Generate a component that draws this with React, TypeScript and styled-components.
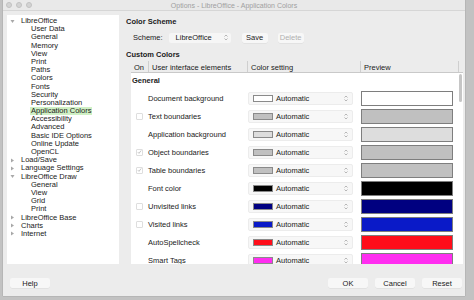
import React from "react";
import styled, { createGlobalStyle } from "styled-components";

const Global = createGlobalStyle`
  html, body { margin: 0; padding: 0; }
  body {
    width: 474px; height: 300px; overflow: hidden;
    background: #c2c2c2;
    font-family: "Liberation Sans", Arial, sans-serif;
    font-size: 7.5px; color: #1a1a1a;
  }
`;

const Desktop = styled.div`
  width: 474px; height: 300px; display: flex; padding-left: 3px; box-sizing: border-box;
`;

const Window = styled.div`
  width: 462px; height: 296px; background: #ececec; display: flex; flex-direction: column;
  box-shadow: 0 0 1px rgba(0,0,0,0.35);
`;

const TitleBar = styled.div`
  height: 10px; flex: none; position: relative; display: flex; align-items: center; justify-content: center;
  border-bottom: 1px solid #d6d6d6; background: #e9e9e9;
  color: #a0a0a0; font-size: 7px;
`;

const Lights = styled.div`
  position: absolute; left: 3px; top: 2px; display: flex; gap: 4px;
`;

const Light = styled.span`
  width: 6px; height: 6px; border-radius: 50%; background: #d3d3d3; border: 0.5px solid #c2c2c2; box-sizing: border-box;
`;

const Main = styled.div`
  display: flex; padding: 4px 2px 0 4px; gap: 7px; height: 249px; flex: none;
`;

const Tree = styled.div`
  width: 112px; height: 249px; background: #fff; padding-top: 2px; box-sizing: border-box; flex: none;
`;

const TreeRow = styled.div<{ $level: number }>`
  height: 8.2px; line-height: 8.2px; display: flex; align-items: center;
  padding-left: ${(p) => (p.$level === 0 ? 3 : 24)}px; white-space: nowrap;
`;

const Twisty = styled.span`
  width: 11px; display: inline-flex; align-items: center; justify-content: flex-start; color: #a5a5a5;
`;

const Label = styled.span<{ $sel?: boolean }>`
  background: ${(p) => (p.$sel ? "#cff0c4" : "transparent")};
  padding: 0 ${(p) => (p.$sel ? 1 : 0)}px;
  margin-left: ${(p) => (p.$sel ? -1 : 0)}px;
`;

const Right = styled.div`
  flex: 1; display: flex; flex-direction: column; min-width: 0;
`;

const Heading = styled.div`
  font-weight: bold; height: 10px; line-height: 10px; margin-top: 2px;
`;

const SchemeRow = styled.div`
  display: flex; align-items: center; height: 11px; margin-top: 5px; padding-left: 7px;
`;

const SchemeSelect = styled.div`
  width: 62px; height: 10px; margin-left: 6px; background: #f6f6f6; border-radius: 2px;
  display: flex; align-items: center; justify-content: space-between; padding: 0 3px 0 7px; box-sizing: border-box;
`;

const Button = styled.div<{ $w: number; $disabled?: boolean }>`
  width: ${(p) => p.$w}px; height: 10px; background: #f7f7f7; border-radius: 2px;
  display: flex; align-items: center; justify-content: center;
  color: ${(p) => (p.$disabled ? "#b0b0b0" : "#1a1a1a")};
  box-shadow: 0 0.5px 0.5px rgba(0,0,0,0.08);
`;

const Spacer = styled.span<{ $w: number }>`
  width: ${(p) => p.$w}px; flex: none;
`;

const Heading2 = styled(Heading)`
  margin-top: 7px;
`;

const Table = styled.div`
  margin-top: 1px; margin-left: 5px; width: 332px; display: flex; flex-direction: column;
`;

const Header = styled.div`
  display: grid; grid-template-columns: 17px 99px 113px 98px 5px; height: 11px;
  border-bottom: 1px solid #c9c9c9; box-sizing: content-box;
`;

const HeadCell = styled.div<{ $sep?: boolean }>`
  display: flex; align-items: center; padding-left: 3px;
  border-left: ${(p) => (p.$sep ? "1px solid #cfcfcf" : "none")};
  padding-top: 1px;
`;

const Body = styled.div`
  position: relative; height: 191px; background: #fff; overflow: hidden;
`;

const Group = styled.div`
  font-weight: bold; height: 9px; line-height: 9px; padding-left: 1px; margin-top: 3px; margin-bottom: 4px;
`;

const Row = styled.div`
  display: grid; grid-template-columns: 17px 99px 113px 98px; height: 18px; align-items: center;
`;

const Check = styled.div`
  width: 7px; height: 7px; margin-left: 5px; border: 0.5px solid #dedede; border-radius: 1px; box-sizing: border-box;
  display: flex; align-items: center; justify-content: center; background: #fff;
`;

const Elem = styled.div`
  white-space: nowrap;
`;

const ColorSelect = styled.div`
  width: 105px; height: 13px; margin-left: 1px; background: #f7f7f7; border-radius: 2px;
  display: flex; align-items: center; padding: 0 4px; box-sizing: border-box;
  border: 0.5px solid #ececec;
`;

const Swatch = styled.span<{ $c: string }>`
  width: 20px; height: 7px; background: ${(p) => p.$c}; border: 1px solid #8a8a8a; box-sizing: border-box; flex: none;
`;

const SwatchText = styled.span`
  margin-left: 3px; flex: 1;
`;

const Preview = styled.div<{ $c: string }>`
  width: 92px; height: 15px; margin-left: 1px; background: ${(p) => p.$c};
  border: 1px solid #7e7e7e; box-sizing: border-box;
`;

const ScrollThumb = styled.div`
  position: absolute; right: 1px; top: 1px; width: 3px; height: 28px; border-radius: 2px; background: #c6c6c6;
`;

const Footer = styled.div`
  display: flex; align-items: flex-start; padding: 14px 3px 0 7px; flex: 1;
`;

const FooterGap = styled.div`
  flex: 1;
`;

const FooterButtons = styled.div`
  display: flex; gap: 7px;
`;

const Chevrons = () => (
  <svg width="4" height="7" viewBox="0 0 4 7">
    <path d="M0.5 2.5 L2 1 L3.5 2.5 M0.5 4.5 L2 6 L3.5 4.5" stroke="#8c8c8c" strokeWidth="0.6" fill="none" />
  </svg>
);

const Tri = ({ open }: { open: boolean }) => (
  <svg width="5" height="5" viewBox="0 0 5 5">
    {open ? <path d="M0.5 1 L4.5 1 L2.5 4 Z" fill="#a8a8a8" /> : <path d="M1 0.5 L4 2.5 L1 4.5 Z" fill="#a8a8a8" />}
  </svg>
);

const CheckMark = () => (
  <svg width="6" height="6" viewBox="0 0 6 6">
    <path d="M1 3.2 L2.4 4.6 L5 1.2" stroke="#9a9a9a" strokeWidth="0.7" fill="none" />
  </svg>
);

type TreeItem = { label: string; level: number; open?: boolean; sel?: boolean };

const tree: TreeItem[] = [
  { label: "LibreOffice", level: 0, open: true },
  { label: "User Data", level: 1 },
  { label: "General", level: 1 },
  { label: "Memory", level: 1 },
  { label: "View", level: 1 },
  { label: "Print", level: 1 },
  { label: "Paths", level: 1 },
  { label: "Colors", level: 1 },
  { label: "Fonts", level: 1 },
  { label: "Security", level: 1 },
  { label: "Personalization", level: 1 },
  { label: "Application Colors", level: 1, sel: true },
  { label: "Accessibility", level: 1 },
  { label: "Advanced", level: 1 },
  { label: "Basic IDE Options", level: 1 },
  { label: "Online Update", level: 1 },
  { label: "OpenCL", level: 1 },
  { label: "Load/Save", level: 0, open: false },
  { label: "Language Settings", level: 0, open: false },
  { label: "LibreOffice Draw", level: 0, open: true },
  { label: "General", level: 1 },
  { label: "View", level: 1 },
  { label: "Grid", level: 1 },
  { label: "Print", level: 1 },
  { label: "LibreOffice Base", level: 0, open: false },
  { label: "Charts", level: 0, open: false },
  { label: "Internet", level: 0, open: false },
];

type ColorRow = { label: string; check?: "off" | "on"; swatch: string; preview: string };

const rows: ColorRow[] = [
  { label: "Document background", swatch: "#ffffff", preview: "#ffffff" },
  { label: "Text boundaries", check: "off", swatch: "#c0c0c0", preview: "#c0c0c0" },
  { label: "Application background", swatch: "#dddddd", preview: "#dddddd" },
  { label: "Object boundaries", check: "on", swatch: "#c0c0c0", preview: "#c0c0c0" },
  { label: "Table boundaries", check: "on", swatch: "#c0c0c0", preview: "#c0c0c0" },
  { label: "Font color", swatch: "#000000", preview: "#000000" },
  { label: "Unvisited links", check: "off", swatch: "#000080", preview: "#000080" },
  { label: "Visited links", check: "off", swatch: "#0a1ac8", preview: "#0a1ac8" },
  { label: "AutoSpellcheck", swatch: "#ff0d1a", preview: "#ff0d1a" },
  { label: "Smart Tags", swatch: "#ff2df0", preview: "#ff2df0" },
];

export default function App() {
  return (
    <>
      <Global />
      <Desktop>
        <Window>
          <TitleBar>
            <Lights>
              <Light />
              <Light />
              <Light />
            </Lights>
            Options - LibreOffice - Application Colors
          </TitleBar>
          <Main>
            <Tree>
              {tree.map((t, i) => (
                <TreeRow key={i} $level={t.level}>
                  {t.level === 0 && (
                    <Twisty>
                      <Tri open={!!t.open} />
                    </Twisty>
                  )}
                  <Label $sel={t.sel}>{t.label}</Label>
                </TreeRow>
              ))}
            </Tree>
            <Right>
              <Heading>Color Scheme</Heading>
              <SchemeRow>
                Scheme:
                <SchemeSelect>
                  LibreOffice
                  <Chevrons />
                </SchemeSelect>
                <Spacer $w={11} />
                <Button $w={26}>Save</Button>
                <Spacer $w={10} />
                <Button $w={26} $disabled>
                  Delete
                </Button>
              </SchemeRow>
              <Heading2>Custom Colors</Heading2>
              <Table>
                <Header>
                  <HeadCell>On</HeadCell>
                  <HeadCell $sep>User interface elements</HeadCell>
                  <HeadCell $sep>Color setting</HeadCell>
                  <HeadCell $sep>Preview</HeadCell>
                  <HeadCell $sep />
                </Header>
                <Body>
                  <Group>General</Group>
                  {rows.map((r, i) => (
                    <Row key={i}>
                      <div>
                        {r.check && <Check>{r.check === "on" && <CheckMark />}</Check>}
                      </div>
                      <Elem>{r.label}</Elem>
                      <ColorSelect>
                        <Swatch $c={r.swatch} />
                        <SwatchText>Automatic</SwatchText>
                        <Chevrons />
                      </ColorSelect>
                      <Preview $c={r.preview} />
                    </Row>
                  ))}
                  <ScrollThumb />
                </Body>
              </Table>
            </Right>
          </Main>
          <Footer>
            <Button $w={40}>Help</Button>
            <FooterGap />
            <FooterButtons>
              <Button $w={40}>OK</Button>
              <Button $w={40}>Cancel</Button>
              <Button $w={40}>Reset</Button>
            </FooterButtons>
          </Footer>
        </Window>
      </Desktop>
    </>
  );
}
